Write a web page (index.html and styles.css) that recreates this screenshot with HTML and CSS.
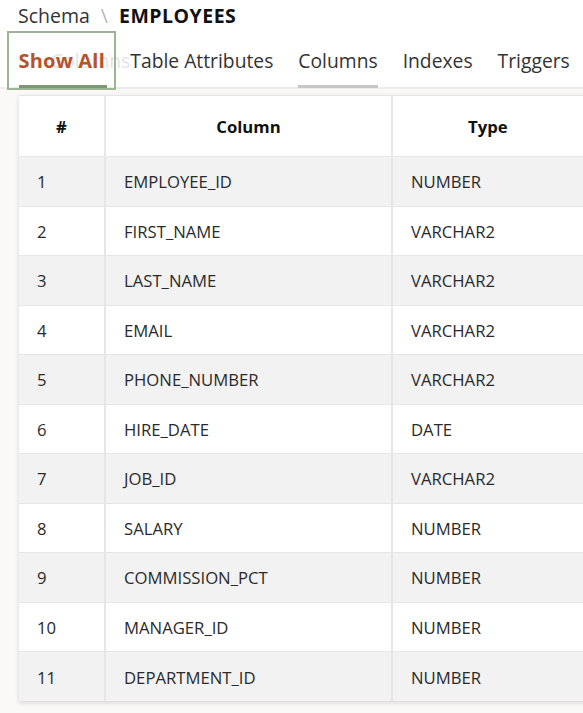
FILE: index.html
```html
<!DOCTYPE html>
<html>
<head>
<meta charset="utf-8">
<link rel="stylesheet" href="styles.css">
</head>
<body>
<div class="page">
  <div class="crumbs">
    <span class="crumb">Schema</span>
    <span class="sep">\</span>
    <span class="crumb-current">EMPLOYEES</span>
  </div>
  <div class="tabs">
    <div class="tab-list">
      <span class="tab ghost">Columns</span>
      <span class="tab">Table Attributes</span>
      <span class="tab active">Columns</span>
      <span class="tab">Indexes</span>
      <span class="tab">Triggers</span>
    </div>
    <div class="show-all"><span class="show-all-text">Show All</span></div>
  </div>
  <div class="content">
    <div class="card">
      <table class="grid">
        <colgroup>
          <col class="c-num"><col class="c-name"><col class="c-type">
        </colgroup>
        <thead>
          <tr><th>#</th><th>Column</th><th>Type</th></tr>
        </thead>
        <tbody>
          <tr><td>1</td><td>EMPLOYEE_ID</td><td>NUMBER</td></tr>
          <tr><td>2</td><td>FIRST_NAME</td><td>VARCHAR2</td></tr>
          <tr><td>3</td><td>LAST_NAME</td><td>VARCHAR2</td></tr>
          <tr><td>4</td><td>EMAIL</td><td>VARCHAR2</td></tr>
          <tr><td>5</td><td>PHONE_NUMBER</td><td>VARCHAR2</td></tr>
          <tr><td>6</td><td>HIRE_DATE</td><td>DATE</td></tr>
          <tr><td>7</td><td>JOB_ID</td><td>VARCHAR2</td></tr>
          <tr><td>8</td><td>SALARY</td><td>NUMBER</td></tr>
          <tr><td>9</td><td>COMMISSION_PCT</td><td>NUMBER</td></tr>
          <tr><td>10</td><td>MANAGER_ID</td><td>NUMBER</td></tr>
          <tr><td>11</td><td>DEPARTMENT_ID</td><td>NUMBER</td></tr>
        </tbody>
      </table>
    </div>
  </div>
</div>
</body>
</html>
```
FILE: styles.css
```css
html, body {
  margin: 0;
  padding: 0;
  background: #ffffff;
}
body {
  font-family: "Segoe UI", "Open Sans", "Noto Sans", sans-serif;
  color: #242424;
  width: 583px;
  height: 713px;
  overflow: hidden;
}
.page {
  display: flex;
  flex-direction: column;
  height: 713px;
}
.crumbs {
  display: flex;
  align-items: baseline;
  gap: 11px;
  padding: 3px 0 0 18px;
  height: 30px;
  font-size: 19.5px;
  line-height: 26px;
}
.crumb { color: #333333; }
.sep { color: #b8b8b8; }
.crumb-current { font-weight: 700; color: #111111; letter-spacing: 0.5px; }

.tabs {
  position: relative;
  height: 56px;
  border-bottom: 2px solid #ececec;
  box-sizing: border-box;
  padding-left: 51px;
}
.tab-list {
  display: flex;
  gap: 25px;
  height: 100%;
  align-items: flex-start;
  padding-top: 15px;
  box-sizing: border-box;
}
.tab {
  font-size: 19.3px;
  line-height: 26px;
  color: #333333;
  white-space: nowrap;
  position: relative;
  height: 39px;
}
.tab.ghost {
  color: #e4e4e4;
  margin-right: -25px;
}
.tab.active::after {
  content: "";
  position: absolute;
  left: 0;
  right: 0;
  bottom: -1px;
  height: 3px;
  background: #c6c6c6;
}
.show-all {
  position: absolute;
  left: 7px;
  top: -2px;
  width: 109px;
  height: 59px;
  border: 2px solid #9bb593;
  box-sizing: border-box;
  padding: 14.5px 0 0 9.5px;
}
.show-all-text {
  font-size: 20px;
  line-height: 26px;
  font-weight: 700;
  color: #b4532c;
  position: relative;
  display: inline-block;
  letter-spacing: 0.2px;
}
.show-all-text::after {
  content: "";
  position: absolute;
  left: 0;
  right: -2px;
  top: 37.5px;
  height: 3px;
  background: #7c9a72;
}

.content {
  flex: 1;
  background: #faf9f8;
  padding: 6px 0 0 19px;
  overflow: hidden;
}
.card {
  width: 600px;
  background: #ffffff;
  box-shadow: 0 2px 5px rgba(0, 0, 0, 0.14);
}
.grid {
  border-collapse: collapse;
  table-layout: fixed;
  width: 600px;
  font-size: 16.7px;
}
.c-num { width: 86px; }
.c-name { width: 287px; }
.c-type { width: 227px; }
.grid th {
  height: 61px;
  box-sizing: border-box;
  font-weight: 700;
  color: #111111;
  text-align: center;
  border-top: 1px solid #e6e6e6;
  border-right: 2px solid #e8e8e8;
  border-bottom: 1px solid #e8e8e8;
  padding: 1px 0 0 0;
}
.grid th:last-child { text-align: left; padding-left: 75px; }
.grid td {
  height: 49.5px;
  box-sizing: border-box;
  padding: 1px 0 0 18px;
  border-right: 2px solid #e6e6e6;
  border-bottom: 1.5px solid #e6e6e6;
  color: #2a2a2a;
}
.grid td:first-child { padding-left: 18px; }
.grid tbody tr:nth-child(odd) td { background: #f2f2f2; }
.grid tbody tr:nth-child(even) td { background: #ffffff; }
.grid tbody tr:last-child td { border-bottom: none; }
```
